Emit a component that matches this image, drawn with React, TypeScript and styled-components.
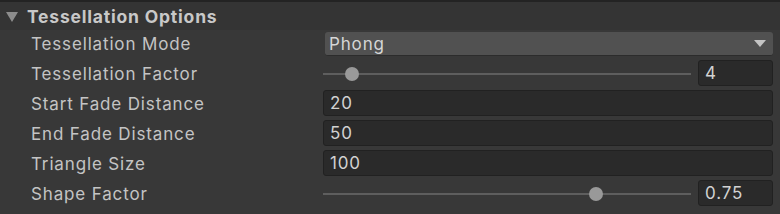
import styled, { createGlobalStyle } from "styled-components";

const GlobalStyle = createGlobalStyle`
  html, body {
    margin: 0;
    padding: 0;
    background: #383838;
  }
  body {
    font-family: Inter, "Noto Sans", sans-serif;
  }
`;

const Panel = styled.div`
  width: 780px;
  height: 214px;
  background: #383838;
  border-top: 2px solid #232323;
  box-sizing: border-box;
  overflow: hidden;
`;

const Header = styled.div`
  display: flex;
  align-items: center;
  height: 28px;
  padding-left: 6px;
  gap: 9px;
  background: #343434;
  color: #c8c8c8;
  font-size: 17.5px;
  font-weight: 700;
  letter-spacing: 0.8px;
`;

const Arrow = styled.span`
  width: 0;
  height: 0;
  border-left: 6px solid transparent;
  border-right: 6px solid transparent;
  border-top: 10px solid #8c8c8c;
  margin-top: 1px;
`;

const Row = styled.div`
  display: grid;
  grid-template-columns: 292px 450px;
  height: 30px;
  padding-left: 31px;
`;

const Label = styled.div`
  color: #c4c4c4;
  font-size: 17px;
  letter-spacing: 0.85px;
  line-height: 28px;
  height: 28px;
`;

const Dropdown = styled.div`
  display: flex;
  align-items: center;
  justify-content: space-between;
  margin: 2px 0 0 2px;
  height: 24px;
  padding: 0 7px 0 4px;
  background: #515151;
  border-radius: 3px;
  border-bottom: 1px solid #2c2c2c;
  box-sizing: border-box;
  color: #d6d6d6;
  font-size: 17px;
  letter-spacing: 0.85px;
`;

const Caret = styled.span`
  width: 0;
  height: 0;
  border-left: 6px solid transparent;
  border-right: 6px solid transparent;
  border-top: 7px solid #c4c4c4;
`;

const Field = styled.div<{ $w?: number }>`
  height: 26px;
  width: ${(p) => (p.$w ? `${p.$w}px` : "100%")};
  box-sizing: border-box;
  background: #2a2a2a;
  border: 1px solid #212121;
  border-radius: 3px;
  color: #d2d2d2;
  font-size: 17px;
  letter-spacing: 0.85px;
  line-height: 24px;
  padding-left: 6px;
`;

const SliderWrap = styled.div`
  display: flex;
  align-items: flex-start;
  gap: 7px;
`;

const Track = styled.div`
  position: relative;
  flex: 1;
  height: 26px;
  &::before {
    content: "";
    position: absolute;
    left: 0;
    right: 0;
    top: 13px;
    height: 2px;
    background: #5e5e5e;
  }
`;

const Thumb = styled.div`
  position: absolute;
  top: 7px;
  width: 14px;
  height: 14px;
  margin-left: -7px;
  border-radius: 50%;
  background: #999999;
`;

const Slider = ({ value, min, max, text }: { value: number; min: number; max: number; text: string }) => {
  const t = (value - min) / (max - min);
  return (
    <SliderWrap>
      <Track>
        <Thumb style={{ left: `calc(7px + (100% - 14px) * ${t})` }} />
      </Track>
      <Field $w={75}>{text}</Field>
    </SliderWrap>
  );
};

const App = () => {
  return (
    <Panel>
      <GlobalStyle />
      <Header>
        <Arrow />
        <span>Tessellation Options</span>
      </Header>
      <Row>
        <Label>Tessellation Mode</Label>
        <Dropdown>
          <span>Phong</span>
          <Caret />
        </Dropdown>
      </Row>
      <Row>
        <Label>Tessellation Factor</Label>
        <Slider value={4} min={1} max={50} text="4" />
      </Row>
      <Row>
        <Label>Start Fade Distance</Label>
        <Field>20</Field>
      </Row>
      <Row>
        <Label>End Fade Distance</Label>
        <Field>50</Field>
      </Row>
      <Row>
        <Label>Triangle Size</Label>
        <Field>100</Field>
      </Row>
      <Row>
        <Label>Shape Factor</Label>
        <Slider value={0.75} min={0} max={1} text="0.75" />
      </Row>
    </Panel>
  );
};

export default App;
